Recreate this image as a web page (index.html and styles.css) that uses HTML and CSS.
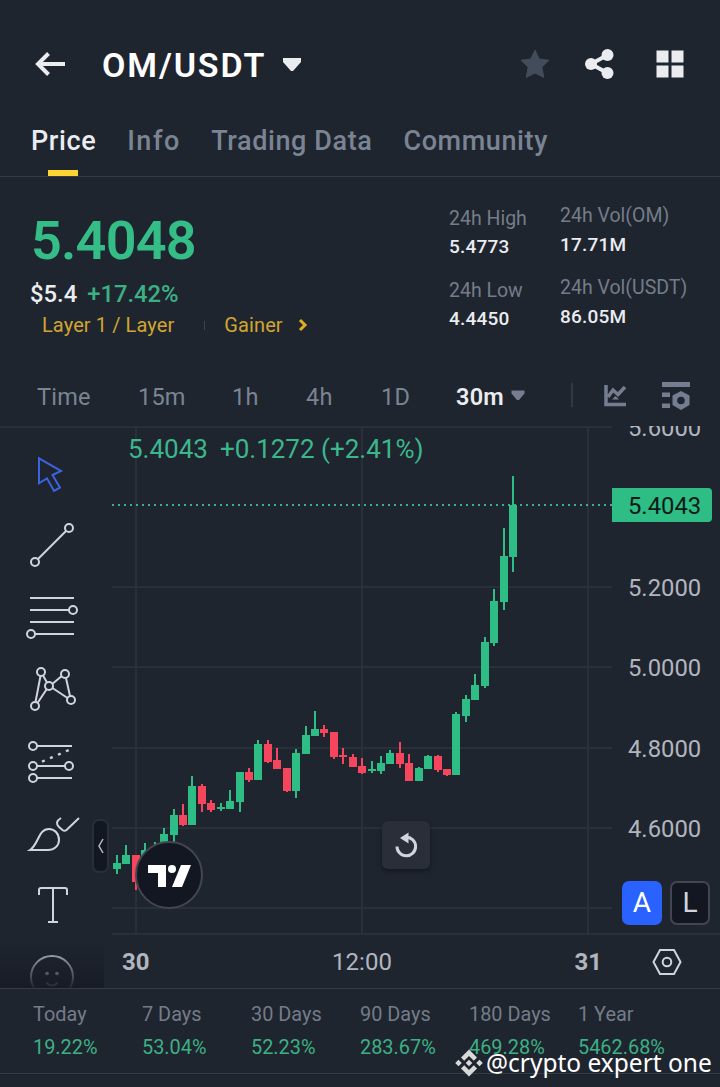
FILE: index.html
```html
<!DOCTYPE html>
<html lang="en">
<head>
	<meta charset="utf-8">
	<title>OM/USDT</title>
	<link rel="stylesheet" href="styles.css">
</head>
<body>
	<header class="header">
		<svg class="back" width="30" height="26" viewBox="0 0 30 26"><path d="M30 13H3M13.500 2.500L3 13l10.500 10.500"/></svg>
		<h1>OM/USDT</h1>
		<svg class="caret" width="20" height="15" viewBox="0 0 20 15"><path d="M1 1h18v4l-8 9h-2L1 5z"/></svg>
		<div class="actions">
			<svg class="star" width="32" height="32" viewBox="0 0 32 32"><path d="M16 2l4.200 9 9.800 1.300-7.200 6.700 2 10.500L16 25l-8.800 4.500 2-10.500L2 12.300l9.800-1.300z"/></svg>
			<svg class="share" width="30" height="32" viewBox="0 0 30 32"><path d="M23.500 7L7 16l16.500 9"/><circle cx="23.500" cy="7" r="6"/><circle cx="7" cy="16" r="6"/><circle cx="23.500" cy="25" r="6"/></svg>
			<svg class="apps" width="28" height="28" viewBox="0 0 28 28"><path d="M.5.500h12v12H.5zM15.500.500h12v12h-12zM.5 15.500h12v12H.5zM15.500 15.500h12v12h-12z"/></svg>
		</div>
	</header>

	<nav class="tabs">
		<a class="active">Price</a>
		<a class="info">Info</a>
		<a>Trading Data</a>
		<a>Community</a>
	</nav>

	<section class="summary">
		<div class="last">
			<div class="price">5.4048</div>
			<div class="change"><span class="usd">$5.4</span><span class="up">+17.42%</span></div>
			<div class="tags">
				<span>Layer 1 / Layer</span>
				<i></i>
				<span>Gainer</span>
				<svg width="10" height="14" viewBox="0 0 10 14"><path d="M2 2l5 5-5 5"/></svg>
			</div>
		</div>
		<dl class="stats">
			<dt>24h High</dt><dd>5.4773</dd>
			<dt>24h Low</dt><dd>4.4450</dd>
		</dl>
		<dl class="stats volume">
			<dt>24h Vol(OM)</dt><dd>17.71M</dd>
			<dt>24h Vol(USDT)</dt><dd>86.05M</dd>
		</dl>
	</section>

	<nav class="intervals">
		<a>Time</a>
		<a>15m</a>
		<a>1h</a>
		<a>4h</a>
		<a>1D</a>
		<a class="active">30m <svg width="14" height="11" viewBox="0 0 14 11"><path d="M.5.500h13v3L8 10H6L.5 3.500z"/></svg></a>
		<i></i>
		<svg class="indicator" width="24" height="24" viewBox="0 0 24 24"><path class="line" d="M3 0v19.500h20M5 12l5-7 5 4.500 7-7.500"/><path class="fill" d="M9 14.500l3.500-3.500 3.500 3.500z"/></svg>
		<svg class="settings" width="30" height="30" viewBox="0 0 30 30"><path d="M1 0h28v5H1zM1 10.500h8v4.500H1zM1 21.500h8V26H1z"/><path fill-rule="evenodd" d="M20 9l8.500 4.500v9.500L20 28l-8.500-5v-9.500zM20 14.700a3.800 3.800 0 1 0 0 7.600 3.800 3.800 0 1 0 0-7.600z"/></svg>
	</nav>

	<main class="chart">
		<aside class="tools">
			<svg class="tool cursor" viewBox="0 0 104 72"><path d="M39 20.300L61 33l-8.500 4 7.500 12.700-6 3.300-7-12.700-8 5z"/></svg>
			<svg class="tool" viewBox="0 0 104 72"><path d="M38 49l28-28"/><circle cx="69" cy="18" r="4"/><circle cx="35" cy="52" r="4"/></svg>
			<svg class="tool" viewBox="0 0 104 72"><path d="M30 16h44M30 28h39M30 40h44M35 52h39"/><circle cx="73" cy="28" r="4"/><circle cx="31" cy="52" r="4"/></svg>
			<svg class="tool" viewBox="0 0 104 72"><path d="M43 21.500l4 7M52.500 29.700l9-7.400M66 24l4 18M52.500 34l15 10M40.500 22l-5 26M37.500 49l9-13.500"/><circle cx="41" cy="18" r="4"/><circle cx="65" cy="20" r="4"/><circle cx="49" cy="32" r="4"/><circle cx="71" cy="46" r="4"/><circle cx="35" cy="52" r="4"/></svg>
			<svg class="tool" viewBox="0 0 104 72"><path d="M37 20h35M37 40h28M37 52h35"/><path class="dots" d="M42 35.700L70 23.500"/><circle cx="33" cy="20" r="4"/><circle cx="33" cy="40" r="4"/><circle cx="69" cy="40" r="4"/><circle cx="33" cy="52" r="4"/></svg>
			<svg class="tool" viewBox="0 0 104 72"><path d="M30 52c9-6 8-21 19-21 6 0 10 5 10 11s-5 10-11 10zM61 20c-5 3-5 6-2 9l3.500 3q2 1.500 4 0L79 20"/></svg>
			<svg class="tool" viewBox="0 0 104 72"><path d="M39 25v-5q0-2 2-2h24q2 0 2 2v5M53 18v34M48 52h10"/></svg>
			<svg class="tool smile" viewBox="0 0 104 46"><circle cx="52" cy="35" r="21"/><path d="M46.500 41q5.500 5 11 0"/><circle class="eye" cx="47" cy="31.500" r="1.800"/><circle class="eye" cx="57" cy="31.500" r="1.800"/></svg>
			<div class="fade"></div>
			<button class="collapse"><svg width="6" height="16" viewBox="0 0 6 16"><path d="M5 1L1 8l4 7"/></svg></button>
		</aside>

		<div class="pane">
			<svg id="candles" width="500" height="509" viewBox="112 426 500 509">
				<path class="grid" d="M112 427h500M112 587h500M112 667h500M112 748h500M112 828h500M112 908h500M112 934h500M136 426v508M362 426v508M588 426v508"/>
				<path class="current" d="M112 505h500"/>
			</svg>
			<div class="legend"><span>5.4043</span><span>+0.1272 (+2.41%)</span></div>
			<svg class="tv" width="68" height="68" viewBox="135 841 68 68"><circle cx="169" cy="875" r="33"/><path d="M148 865h18v22h-8v-14h-10zM181 865h10l-9 22h-10z"/><circle class="dot" cx="172" cy="869" r="4"/></svg>
			<button class="reset"><svg width="24" height="28" viewBox="394 831 24 28"><path class="arc" d="M397 846.500a9.300 9.300 0 1 0 9.500-9.300"/><path class="head" d="M400 838l8.500-5.500v11z"/></svg></button>
		</div>

		<div class="prices">
			<span>5.6000</span>
			<span class="now">5.4043</span>
			<span>5.2000</span>
			<span>5.0000</span>
			<span>4.8000</span>
			<span>4.6000</span>
			<div class="modes"><b class="on">A</b><b>L</b></div>
		</div>

		<div class="times">
			<b>30</b>
			<span>12:00</span>
			<b>31</b>
		</div>
		<svg class="gear" width="30" height="28" viewBox="0 0 30 28"><path d="M8 2h14l6.500 12L22 26H8L1.500 14z"/><circle cx="15" cy="14" r="4.300"/></svg>
	</main>

	<section class="performance">
		<div><span>Today</span><b>19.22%</b></div>
		<div><span>7 Days</span><b>53.04%</b></div>
		<div><span>30 Days</span><b>52.23%</b></div>
		<div><span>90 Days</span><b>283.67%</b></div>
		<div><span>180 Days</span><b>469.28%</b></div>
		<div><span>1 Year</span><b>5462.68%</b></div>
	</section>

	<div class="watermark">
		<svg width="28" height="28" viewBox="0 0 28 28"><path d="M14 .500l8 8-3.200 3.200L14 7l-4.800 4.700L6 8.500zM3.500 10.700L6.800 14l-3.300 3.300L.2 14zM14 10.700l3.300 3.300-3.300 3.300-3.300-3.300zM24.500 10.700l3.300 3.300-3.300 3.300-3.300-3.300zM9.200 16.300L14 21l4.800-4.700 3.200 3.200-8 8-8-8z"/></svg>
		<span>@crypto expert one</span>
	</div>

	<script src="chart.js"></script>
</body>
</html>
```

FILE: styles.css
```css
* {
	box-sizing: border-box;
}

body {
	margin: 0;
	width: 720px;
	height: 1087px;
	overflow: hidden;
	position: relative;
	background: #1f252f;
	color: #eaecef;
	font-family: Roboto, "Liberation Sans", sans-serif;
}

svg {
	display: block;
	flex: none;
}

button {
	padding: 0;
	border: none;
}

.up {
	color: #3cb083;
}

/* header */

.header {
	display: flex;
	align-items: center;
	height: 110px;
	padding: 18px 36px 0 35px;
}

.header h1 {
	margin: 2px 0 0 37px;
	width: 165px;
	font-size: 34px;
	line-height: 40px;
	font-weight: 600;
	letter-spacing: 1.850px;
	color: #fff;
	white-space: nowrap;
}

.back path {
	fill: none;
	stroke: #eaecef;
	stroke-width: 4;
}

.caret {
	margin-left: 15px;
	fill: #eaecef;
}

.actions {
	display: flex;
	align-items: center;
	margin-left: auto;
}

.star {
	fill: #434c5a;
	stroke: #434c5a;
	stroke-linejoin: round;
}

.share {
	margin-left: 33px;
	fill: #eaecef;
}

.share path {
	fill: none;
	stroke: #eaecef;
	stroke-width: 4;
}

.apps {
	margin-left: 42px;
	fill: #eaecef;
}

/* tabs */

.tabs {
	display: flex;
	gap: 31px;
	height: 67px;
	padding: 14px 31px 0;
	border-bottom: 1px solid #363c46;
	font-size: 27px;
	line-height: 34px;
	font-weight: 500;
	letter-spacing: 0.6px;
	color: #7b8492;
}

.tabs a {
	position: relative;
}

.tabs .info {
	width: 53px;
	letter-spacing: 1.5px;
}

.tabs .active {
	color: #eaecef;
}

.tabs .active:after {
	content: "";
	position: absolute;
	left: 17px;
	bottom: 0;
	width: 30px;
	height: 6px;
	background: #fcd535;
}

/* price summary */

.summary {
	display: flex;
	height: 190px;
	padding-left: 30px;
}

.last {
	width: 419px;
	padding-top: 34px;
}

.price {
	padding-left: 1px;
	font-size: 54px;
	line-height: 60px;
	font-weight: 600;
	letter-spacing: -0.8px;
	color: #35bd88;
}

.change {
	display: flex;
	gap: 10px;
	padding-top: 9px;
	font-size: 23.8px;
	line-height: 28px;
	font-weight: 500;
}

.tags {
	display: flex;
	align-items: center;
	padding: 4px 0 0 12px;
	font-size: 20px;
	line-height: 26px;
	letter-spacing: 0.1px;
	color: #d1a52f;
}

.tags i {
	width: 1px;
	height: 9px;
	margin: 0 19px 0 30px;
	background: #3c434e;
}

.tags svg {
	margin-left: 15px;
	fill: none;
	stroke: #e0ad22;
	stroke-width: 3;
}

.stats {
	width: 111px;
	margin: 0;
	padding-top: 28px;
	font-size: 19.5px;
	line-height: 28px;
}

.stats dt {
	color: #747c89;
	white-space: nowrap;
}

.stats dd {
	margin: 0 0 16px;
	font-size: 19px;
	font-weight: 500;
	letter-spacing: 0.2px;
}

.volume {
	width: 150px;
	padding-top: 26px;
}

.volume dt {
	margin-top: -1px;
	margin-bottom: 1px;
}

/* intervals */

.intervals {
	display: flex;
	align-items: center;
	height: 59px;
	padding-left: 37px;
	font-size: 23.5px;
	letter-spacing: 0.2px;
	color: #7b8492;
}

.intervals a {
	width: 101px;
}

.intervals a:nth-child(2) {
	width: 94px;
}

.intervals a:nth-child(3) {
	width: 74px;
}

.intervals a:nth-child(4) {
	width: 75px;
}

.intervals a:nth-child(5) {
	width: 75px;
}

.intervals .active {
	display: flex;
	align-items: center;
	gap: 7px;
	width: 115px;
	font-weight: 600;
	color: #eaecef;
}

.intervals .active svg {
	margin-top: -3px;
}

.intervals i {
	width: 2px;
	height: 24px;
	margin-right: 30px;
	margin-top: -3px;
	background: #323943;
}

.intervals svg {
	fill: #747e90;
}

.indicator .line {
	fill: none;
	stroke: #747e90;
	stroke-width: 3.5;
}

.settings {
	margin-left: 34px;
}

/* chart */

.chart {
	display: grid;
	grid-template-columns: 112px 500px 108px;
	grid-template-rows: 509px 53px;
	height: 563px;
	border-bottom: 1px solid #363c46;
}

.tools {
	position: relative;
	grid-row: 1 / 3;
	height: 562px;
	padding-top: 10px;
	border-top: 2px solid #29303a;
}

.tool {
	width: 104px;
	height: 72px;
	fill: none;
	stroke: #d1d4dc;
	stroke-width: 2;
}

.cursor {
	stroke: #3c63e0;
}

.dots {
	stroke-width: 2.4;
	stroke-dasharray: 3 5.700;
}

.smile {
	height: 46px;
}

.smile .eye {
	fill: #d1d4dc;
	stroke: none;
}

.fade {
	position: absolute;
	left: 0;
	bottom: 0;
	width: 104px;
	height: 48px;
	background: linear-gradient(rgba(22, 27, 38, 0), rgba(22, 27, 38, 0.95));
}

.collapse {
	position: absolute;
	left: 92px;
	top: 391px;
	display: flex;
	align-items: center;
	justify-content: center;
	width: 17px;
	height: 54px;
	border: 2px solid #2a2e39;
	border-radius: 7px;
	background: #131722;
}

.collapse path {
	fill: none;
	stroke: #b8bcc6;
	stroke-width: 1.5;
}

.pane {
	position: relative;
}

.grid {
	stroke: #2a3039;
	stroke-width: 2;
}

.current {
	stroke: #3cae88;
	stroke-width: 2;
	stroke-dasharray: 2 4;
}

.candle-up {
	fill: #2ebd85;
}

.candle-down {
	fill: #f6465d;
}

.legend {
	position: absolute;
	left: 16px;
	top: 8px;
	display: flex;
	gap: 12px;
	font-size: 26px;
	line-height: 30px;
	color: #3cb78c;
	white-space: nowrap;
}

.tv {
	position: absolute;
	left: 23px;
	top: 415px;
	fill: #fff;
}

.tv circle {
	fill: #131722;
	stroke: #434651;
	stroke-width: 2;
}

.tv .dot {
	fill: #fff;
	stroke: none;
}

.reset {
	position: absolute;
	left: 270px;
	top: 395px;
	display: flex;
	align-items: center;
	justify-content: center;
	width: 48px;
	height: 48px;
	border-radius: 6px;
	background: #2a2e39;
	box-shadow: 0 2px 5px rgba(0, 0, 0, 0.4);
}

.arc {
	fill: none;
	stroke: #d1d4dc;
	stroke-width: 3;
}

.head {
	fill: #d1d4dc;
}

.prices {
	display: flex;
	flex-direction: column;
	gap: 46.400px;
	overflow: hidden;
	border-bottom: 2px solid #2a3039;
	font-size: 23.8px;
	line-height: 34px;
	color: #b2b5be;
}

.prices span {
	flex: none;
	width: 100px;
	height: 34px;
	padding-left: 16px;
}

.prices span:first-child {
	margin-top: -15px;
}

.prices .now {
	margin-top: -3px;
	margin-bottom: 2px;
	border-radius: 0 4px 4px 0;
	background: #2ebd85;
	color: #0c1a18;
	line-height: 36px;
}

.modes {
	display: flex;
	gap: 8px;
	margin-top: -11px;
	padding-left: 10px;
}

.modes b {
	width: 40px;
	height: 44px;
	border: 2px solid #434651;
	border-radius: 7px;
	background: #131722;
	color: #d1d4dc;
	font-size: 28px;
	line-height: 40px;
	font-weight: 400;
	text-align: center;
}

.modes .on {
	border-color: #2962ff;
	background: #2962ff;
	color: #fff;
}

.times {
	display: flex;
	justify-content: space-between;
	padding: 12px 10px 0 10px;
	font-size: 24px;
	line-height: 30px;
	color: #b2b5be;
}

.gear {
	margin: 13px 0 0 40px;
	fill: none;
	stroke: #d1d4dc;
	stroke-width: 2;
}

/* performance */

.performance {
	display: grid;
	grid-template-columns: repeat(6, 109px);
	height: 85px;
	padding: 13px 0 0 33px;
	border-bottom: 1px solid #363c46;
	font-size: 19.9px;
	line-height: 26px;
	color: #747c89;
}

.performance span, .performance b {
	display: block;
	white-space: nowrap;
}

.performance b {
	margin-top: 7px;
	font-weight: 400;
	color: #3cb083;
}

.watermark {
	position: absolute;
	left: 455px;
	top: 1047px;
	display: flex;
	align-items: center;
	gap: 3px;
	color: #fff;
	font-family: "Noto Sans", sans-serif;
	font-size: 24.5px;
	line-height: 32px;
	white-space: nowrap;
}

.watermark svg {
	fill: #d9d9d9;
}
```

FILE: chart.js
```js
// x, high, body top, body bottom, low, direction
var candles = [
	[117, 855, 863, 869, 874, 1],
	[126, 845, 855, 864, 864, 1],
	[136, 855, 855, 882, 890, 0],
	[145, 843, 850, 870, 872, 1],
	[155, 842, 846, 860, 862, 1],
	[164, 828, 834, 846, 846, 1],
	[174, 809, 815, 835, 842, 1],
	[183, 804, 815, 825, 826, 0],
	[192, 776, 786, 825, 825, 1],
	[202, 784, 786, 804, 812, 0],
	[211, 800, 803, 810, 812, 0],
	[221, 803, 807, 809, 811, 1],
	[230, 790, 801, 809, 809, 1],
	[240, 772, 772, 802, 812, 1],
	[249, 768, 772, 780, 782, 0],
	[258, 740, 744, 780, 780, 1],
	[268, 740, 744, 762, 763, 0],
	[277, 748, 760, 769, 769, 0],
	[287, 768, 768, 791, 792, 0],
	[296, 749, 753, 791, 798, 1],
	[306, 726, 735, 754, 754, 1],
	[315, 711, 729, 736, 736, 1],
	[324, 725, 729, 733, 737, 0],
	[334, 732, 732, 757, 759, 0],
	[343, 748, 755, 757, 764, 0],
	[353, 754, 757, 767, 767, 0],
	[362, 758, 766, 773, 774, 0],
	[372, 761, 769, 771, 773, 1],
	[381, 756, 763, 771, 774, 1],
	[390, 750, 753, 764, 764, 1],
	[400, 742, 753, 764, 768, 0],
	[409, 754, 763, 781, 781, 0],
	[419, 767, 768, 781, 781, 1],
	[428, 755, 756, 769, 769, 1],
	[438, 755, 756, 770, 772, 0],
	[447, 769, 769, 775, 776, 0],
	[456, 712, 714, 775, 775, 1],
	[466, 695, 699, 716, 722, 1],
	[475, 674, 685, 700, 700, 1],
	[485, 637, 642, 686, 688, 1],
	[494, 589, 601, 643, 646, 1],
	[504, 528, 556, 602, 610, 1],
	[513, 476, 505, 557, 572, 1]
];

var svg = document.getElementById('candles');

function addRect(x, y, width, height, up) {
	var rect = document.createElementNS('http://www.w3.org/2000/svg', 'rect');
	rect.setAttribute('x', x);
	rect.setAttribute('y', y);
	rect.setAttribute('width', width);
	rect.setAttribute('height', height);
	rect.setAttribute('class', up ? 'candle-up' : 'candle-down');
	svg.appendChild(rect);
}

candles.forEach(function (c) {
	addRect(c[0] - 1, c[1], 2, c[4] - c[1], c[5]);
	addRect(c[0] - 4, c[2], 8, c[3] - c[2], c[5]);
});
```
